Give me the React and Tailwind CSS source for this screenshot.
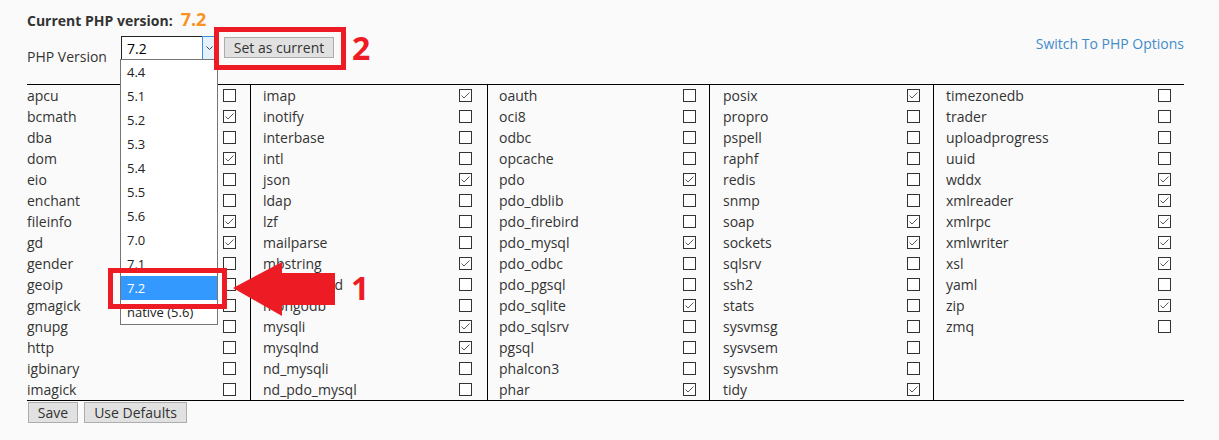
import React from "react";

const cols = [
  [
    ["apcu", 0], ["bcmath", 1], ["dba", 0], ["dom", 1], ["eio", 0], ["enchant", 0],
    ["fileinfo", 1], ["gd", 1], ["gender", 0], ["geoip", 0], ["gmagick", 0], ["gnupg", 0],
    ["http", 0], ["igbinary", 0], ["imagick", 0],
  ],
  [
    ["imap", 1], ["inotify", 0], ["interbase", 0], ["intl", 0], ["json", 1], ["ldap", 0],
    ["lzf", 0], ["mailparse", 0], ["mbstring", 1], ["memcached", 0], ["mongodb", 0], ["mysqli", 1],
    ["mysqlnd", 1], ["nd_mysqli", 0], ["nd_pdo_mysql", 0],
  ],
  [
    ["oauth", 0], ["oci8", 0], ["odbc", 0], ["opcache", 0], ["pdo", 1], ["pdo_dblib", 0],
    ["pdo_firebird", 0], ["pdo_mysql", 1], ["pdo_odbc", 0], ["pdo_pgsql", 0], ["pdo_sqlite", 1],
    ["pdo_sqlsrv", 0], ["pgsql", 0], ["phalcon3", 0], ["phar", 1],
  ],
  [
    ["posix", 1], ["propro", 0], ["pspell", 0], ["raphf", 0], ["redis", 0], ["snmp", 0],
    ["soap", 1], ["sockets", 1], ["sqlsrv", 0], ["ssh2", 0], ["stats", 0], ["sysvmsg", 0],
    ["sysvsem", 0], ["sysvshm", 0], ["tidy", 1],
  ],
  [
    ["timezonedb", 0], ["trader", 0], ["uploadprogress", 0], ["uuid", 0], ["wddx", 1],
    ["xmlreader", 1], ["xmlrpc", 1], ["xmlwriter", 1], ["xsl", 1], ["yaml", 0], ["zip", 1], ["zmq", 0],
  ],
];

const colClasses = [
  "pl-0 pr-[14px]",
  "border-l border-black pl-[12px] pr-[15px]",
  "border-l border-black pl-[11px] pr-[13px]",
  "border-l border-black pl-[13px] pr-[13px]",
  "border-l border-black pl-[12px] pr-[13px]",
];

const versions = ["4.4", "5.1", "5.2", "5.3", "5.4", "5.5", "5.6", "7.0", "7.1", "7.2", "native (5.6)"];

function Checkbox({ checked }) {
  return (
    <div className="w-[13px] h-[13px] border border-[#333] bg-white relative shrink-0">
      {checked ? (
        <svg width="11" height="11" viewBox="0 0 11 11" className="absolute left-0 top-0">
          <polyline points="1.5,5.5 4,8 9.5,2.5" fill="none" stroke="#5a5a5a" strokeWidth="1" />
        </svg>
      ) : null}
    </div>
  );
}

export default function App() {
  return (
    <div
      className="relative w-[1219px] h-[440px] bg-[#fafafa] text-[#333] pl-[27px] pr-[35px] pt-[10px] overflow-hidden"
      style={{ fontFamily: '"Open Sans", sans-serif' }}
    >
      {/* Row 1 */}
      <div className="h-[26px] flex items-baseline">
        <span className="text-[14px] font-bold leading-[19px] text-[#333]">Current PHP version:</span>
        <span className="ml-[8px] text-[18px] font-bold leading-[19px] text-[#f7931e]">7.2</span>
      </div>

      {/* Row 2 */}
      <div className="h-[48px] flex items-start">
        <div className="w-[94px] pt-[11px] text-[14px] leading-[19px]">PHP Version</div>
        <div className="relative w-[96px] h-[24px] border border-[#222] bg-white flex items-center">
          <span className="pl-[5px] text-[14px] leading-[19px] text-black flex-1">7.2</span>
          <div className="w-[15px] h-[24px] -my-px -mr-px border border-[#3c8fe0] bg-[#e5f1fb] flex items-center justify-center">
            <svg width="7" height="5" viewBox="0 0 7 5">
              <polyline points="0.5,0.5 3.5,3.5 6.5,0.5" fill="none" stroke="#444" strokeWidth="1" />
            </svg>
          </div>
        </div>
        <button className="ml-[7px] mt-px h-[21px] w-[110px] bg-[#e1e1e1] border border-[#adadad] text-[14px] leading-[19px] text-[#333] flex items-center justify-center">
          Set as current
        </button>
        <a className="ml-auto -mt-[2px] text-[14px] leading-[19px] text-[#428bca]">Switch To PHP Options</a>
      </div>

      {/* Table */}
      <div className="border-t border-b border-black grid grid-cols-[223px_237px_222px_224px_251px]">
        {cols.map((col, ci) => (
          <div key={ci} className={"flex flex-col " + colClasses[ci]}>
            {col.map(([name, checked]) => (
              <div key={name} className="h-[21px] flex items-center justify-between text-[14px] leading-[19px]">
                <span className="-mt-px">{name}</span>
                <Checkbox checked={checked} />
              </div>
            ))}
          </div>
        ))}
      </div>

      {/* Bottom buttons */}
      <div className="flex gap-[6px] mt-px ml-px">
        <button className="h-[21px] w-[50px] bg-[#e1e1e1] border border-[#adadad] text-[14px] leading-[19px] text-[#333] flex items-center justify-center">
          Save
        </button>
        <button className="h-[21px] w-[103px] bg-[#e1e1e1] border border-[#adadad] text-[14px] leading-[19px] text-[#333] flex items-center justify-center">
          Use Defaults
        </button>
      </div>

      {/* Open dropdown list */}
      <div className="absolute left-[120px] top-[59px] w-[98px] border border-[#767676] bg-white flex flex-col">
        {versions.map((v) => (
          <div
            key={v}
            className={
              "h-[24px] pl-[6px] flex items-center text-[13px] leading-[18px] " +
              (v === "7.2" ? "bg-[#3399ff] text-white" : "text-[#222]")
            }
          >
            {v}
          </div>
        ))}
      </div>

      {/* Annotation boxes */}
      <div className="absolute left-[108px] top-[268px] w-[119px] h-[41px] border-[5px] border-[#ed1c24]" />
      <div className="absolute left-[214px] top-[27px] w-[132px] h-[43px] border-[5px] border-[#ed1c24]" />

      {/* Arrow */}
      <svg className="absolute left-0 top-0" width="1219" height="440" viewBox="0 0 1219 440">
        <polygon points="233,288 282,262 282,273 335,273 335,305 282,305 282,316" fill="#ed1c24" />
      </svg>

      {/* Numbers */}
      <div className="absolute left-[351px] top-[272px] text-[32px] font-bold leading-[32px] text-[#ed1c24]">1</div>
      <div className="absolute left-[352px] top-[32px] text-[32px] font-bold leading-[32px] text-[#ed1c24]">2</div>
    </div>
  );
}
